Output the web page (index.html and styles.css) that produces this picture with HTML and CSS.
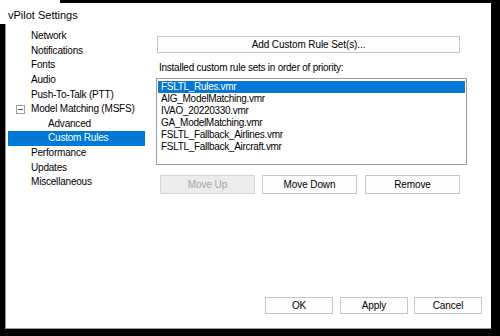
FILE: index.html
```html
<!DOCTYPE html>
<html>
<head>
<meta charset="utf-8">
<link rel="stylesheet" href="styles.css">
</head>
<body>
<div class="window">
  <div class="titlebar">vPilot Settings</div>
  <div class="content">
    <div class="main">
      <ul class="tree">
        <li class="node">Network</li>
        <li class="node">Notifications</li>
        <li class="node">Fonts</li>
        <li class="node">Audio</li>
        <li class="node">Push-To-Talk (PTT)</li>
        <li class="node parent"><span class="expander"></span>Model Matching (MSFS)</li>
        <li class="node child">Advanced</li>
        <li class="node child selected">Custom Rules</li>
        <li class="node">Performance</li>
        <li class="node">Updates</li>
        <li class="node">Miscellaneous</li>
      </ul>
      <div class="panel">
        <button class="btn add-btn">Add Custom Rule Set(s)...</button>
        <div class="label">Installed custom rule sets in order of priority:</div>
        <ul class="listbox">
          <li class="item selected">FSLTL_Rules.vmr</li>
          <li class="item">AIG_ModelMatching.vmr</li>
          <li class="item">IVAO_20220330.vmr</li>
          <li class="item">GA_ModelMatching.vmr</li>
          <li class="item">FSLTL_Fallback_Airlines.vmr</li>
          <li class="item">FSLTL_Fallback_Aircraft.vmr</li>
        </ul>
        <div class="list-actions">
          <button class="btn action disabled">Move Up</button>
          <button class="btn action gap7">Move Down</button>
          <button class="btn action gap8">Remove</button>
        </div>
      </div>
    </div>
    <div class="footer">
      <button class="btn dlg">OK</button>
      <button class="btn dlg gap7">Apply</button>
      <button class="btn dlg gap6">Cancel</button>
    </div>
  </div>
</div>
</body>
</html>
```

FILE: styles.css
```css
html, body {
  margin: 0;
  padding: 0;
}
body {
  width: 500px;
  height: 336px;
  background: #000;
  font-family: "Liberation Sans", Arial, sans-serif;
  color: #000;
  overflow: hidden;
}
.window {
  width: 491px;
  height: 329px;
  display: flex;
  flex-direction: column;
}
.titlebar {
  height: 24px;
  box-sizing: border-box;
  padding: 9px 0 0 8px;
  font-size: 11px;
  line-height: 13px;
  background: linear-gradient(#000, #000) no-repeat 60px 0 / calc(100% - 60px) 3px, #fff;
}
.content {
  flex: 1;
  margin-left: 5px;
  background: #fff;
  border-left: 1px solid #9a9a9a;
  border-bottom: 1px solid #9a9a9a;
  display: flex;
  flex-direction: column;
}
.main {
  display: flex;
}
.tree {
  list-style: none;
  margin: 0 0 0 2px;
  padding: 5.2px 0 0 0;
  width: 137px;
  font-size: 10px;
  letter-spacing: -0.2px;
}
.node {
  height: 14.6px;
  line-height: 14.6px;
  padding-left: 23px;
  white-space: nowrap;
}
.node.child {
  padding-left: 40px;
}
.node.parent {
  display: flex;
  align-items: center;
  padding-left: 8px;
}
.expander {
  width: 9px;
  height: 9px;
  box-sizing: border-box;
  border: 1px solid #a0a0a0;
  margin-right: 6px;
  display: flex;
  align-items: center;
  justify-content: center;
}
.expander::before {
  content: "";
  width: 5px;
  height: 1px;
  background: #555;
}
.node.selected {
  background: #0078d7;
  color: #fff;
}
.panel {
  margin-left: 11px;
  padding-top: 12px;
  width: 311px;
}
.btn {
  font-family: "Liberation Sans", Arial, sans-serif;
  font-size: 10px;
  letter-spacing: -0.1px;
  color: #000;
  background: #fdfdfd;
  border: 1px solid #c6c6c6;
  box-sizing: border-box;
  padding: 0;
  margin: 0;
  display: block;
}
.add-btn {
  margin-left: 1px;
  width: 303px;
  height: 17px;
}
.label {
  margin-top: 8px;
  padding-left: 3px;
  font-size: 10px;
  line-height: 14px;
  letter-spacing: -0.25px;
}
.listbox {
  list-style: none;
  margin: 3px 0 0 0;
  padding: 2px 1px 0 1px;
  height: 87px;
  box-sizing: border-box;
  border: 1px solid #9c9c9c;
  font-size: 10px;
  letter-spacing: -0.3px;
}
.item {
  height: 12px;
  line-height: 11px;
  padding-left: 3px;
  white-space: nowrap;
}
.item.selected {
  background: #0078d7;
  color: #fff;
  outline: 1px dotted #3a6ea5;
  outline-offset: -1px;
}
.list-actions {
  display: flex;
  margin-top: 10px;
  padding-left: 4px;
}
.action {
  width: 95px;
  height: 19px;
}
.action.disabled {
  background: #ececec;
  border-color: #d4d4d4;
  color: #a2a2a2;
}
.gap7 {
  margin-left: 7px;
}
.gap8 {
  margin-left: 8px;
}
.gap6 {
  margin-left: 6px;
}
.footer {
  margin-top: auto;
  display: flex;
  justify-content: flex-end;
  padding: 0 9px 14px 0;
}
.dlg {
  width: 68px;
  height: 17px;
}
```
